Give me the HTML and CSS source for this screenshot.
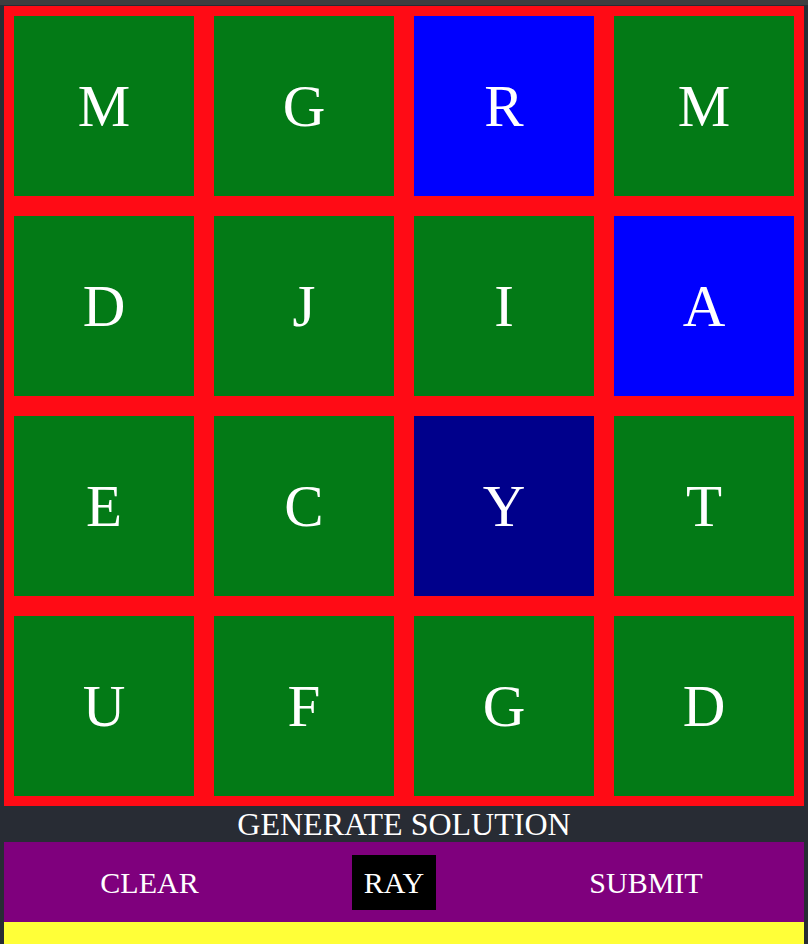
FILE: index.html
```html
<!DOCTYPE html>
<html lang="en">
<head>
<meta charset="utf-8">
<title>Word Grid</title>
<link rel="stylesheet" href="styles.css">
</head>
<body>
<div class="topbar"></div>
<main class="app">
  <div class="board">
    <div class="cell">M</div>
    <div class="cell">G</div>
    <div class="cell cell-selected">R</div>
    <div class="cell">M</div>
    <div class="cell">D</div>
    <div class="cell">J</div>
    <div class="cell">I</div>
    <div class="cell cell-selected">A</div>
    <div class="cell">E</div>
    <div class="cell">C</div>
    <div class="cell cell-current">Y</div>
    <div class="cell">T</div>
    <div class="cell">U</div>
    <div class="cell">F</div>
    <div class="cell">G</div>
    <div class="cell">D</div>
  </div>
  <div class="generate">GENERATE SOLUTION</div>
  <div class="controls">
    <div class="control">CLEAR</div>
    <div class="control word">RAY</div>
    <div class="control">SUBMIT</div>
  </div>
  <div class="footer"></div>
</main>
</body>
</html>
```
FILE: styles.css
```css
html, body {
  margin: 0;
  padding: 0;
  background: #282c34;
  height: 944px;
  overflow: hidden;
}

body {
  font-family: "Liberation Serif", "Times New Roman", serif;
  color: #ffffff;
}

.topbar {
  height: 5px;
  background: #3e3e40;
}

.app {
  padding: 1px 4px 0 4px;
}

.board {
  display: grid;
  grid-template-columns: repeat(4, 180px);
  grid-auto-rows: 180px;
  gap: 20px;
  padding: 10px;
  background: #ff0b15;
}

.cell {
  display: flex;
  align-items: center;
  justify-content: center;
  background: #037a16;
  font-size: 59px;
}

.cell-selected {
  background: #0000ff;
}

.cell-current {
  background: #00008b;
}

.generate {
  height: 36px;
  line-height: 36px;
  text-align: center;
  font-size: 32px;
}

.controls {
  height: 80px;
  display: flex;
  align-items: center;
  justify-content: center;
  gap: 141px;
  padding-right: 5px;
  background: #7f007d;
}

.control {
  font-size: 30px;
  line-height: 33px;
  padding: 11px 12px;
}

.word {
  background: #000000;
}

.footer {
  height: 22px;
  background: #ffff38;
}
```
